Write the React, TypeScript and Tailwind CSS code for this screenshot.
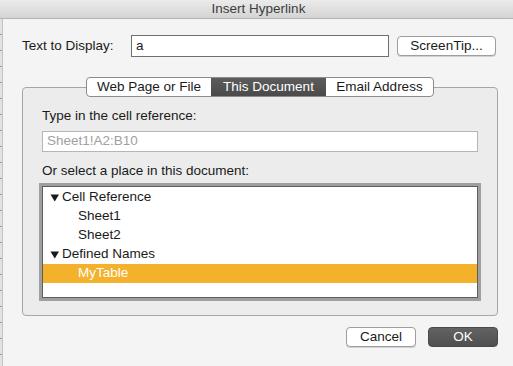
const font = "font-['Liberation_Sans','Helvetica_Neue',Arial,sans-serif]";

const Caret = () => (
  <svg width="10" height="8" viewBox="0 0 10 8" className="mr-[2px] shrink-0">
    <path d="M0.5 0.5 H9 L4.75 7.5 Z" fill="#1a1a1a" />
  </svg>
);

const rows = [
  { label: "Cell Reference", level: 0 },
  { label: "Sheet1", level: 1 },
  { label: "Sheet2", level: 1 },
  { label: "Defined Names", level: 0 },
  { label: "MyTable", level: 1, selected: true },
];

const App = () => {
  return (
    <div className={`flex h-[366px] w-[513px] flex-col overflow-hidden bg-[#f4f4f4] text-[13.5px] text-[#1a1a1a] ${font}`}>
      {/* title bar */}
      <div className="flex h-[19px] shrink-0 items-center justify-center border-b border-[#b4b4b4] bg-gradient-to-b from-[#ebebeb] to-[#d4d4d4] pl-[4px] leading-none text-[#3c3c3c]">
        Insert Hyperlink
      </div>

      <div className="flex flex-1">
        {/* sheet peeking behind the dialog */}
        <div className="w-[3px] shrink-0 border-r border-[#c4c4c4] bg-[repeating-linear-gradient(to_bottom,#e2e2e2_0px,#e2e2e2_15px,#9c9c9c_15px,#9c9c9c_16px)]" />

        <div className="flex flex-1 flex-col pl-[19px] pr-[16px]">
          <div className="mt-[16px] flex h-[22px] items-center">
            <span className="w-[109px]">Text to Display:</span>
            <div className="flex h-[22px] w-[258px] items-center border border-[#6f6f6f] bg-white pl-[4px]">a</div>
            <button className="ml-[8px] h-[20px] w-[99px] rounded-[4px] border border-[#9e9e9e] bg-white leading-none shadow-[0_1px_0_#d0d0d0]">
              ScreenTip...
            </button>
          </div>

          {/* tabs */}
          <div className="relative z-10 mt-[20px] flex justify-center">
            <div className="flex h-[20px] overflow-hidden rounded-[4px] border border-[#8c8c8c] bg-white leading-none">
              <div className="flex w-[124px] items-center justify-center">Web Page or File</div>
              <div className="flex w-[115px] items-center justify-center bg-gradient-to-b from-[#5c5c5c] to-[#4a4a4a] text-white">
                This Document
              </div>
              <div className="flex w-[107px] items-center justify-center">Email Address</div>
            </div>
          </div>

          {/* group box */}
          <div className="-mt-[10px] flex h-[229px] flex-col rounded-[4px] border border-[#a6a6a6] bg-[#ececec] pl-[19px] pr-[19px] pt-[20px]">
            <div className="h-[16px] leading-[16px]">Type in the cell reference:</div>
            <div className="mt-[7px] flex h-[21px] items-center border border-[#b6b6b6] bg-white pl-[4px] text-[#a0a0a0]">
              Sheet1!A2:B10
            </div>
            <div className="mt-[11px] h-[16px] leading-[16px]">Or select a place in this document:</div>
            <div className="mt-[7px] h-[112px] w-[436px] border border-[#5e5e5e] bg-white pt-px shadow-[0_0_0_3px_#9f9f9f]">
              {rows.map((r) => (
                <div
                  key={r.label}
                  className={`flex h-[19px] items-center ${r.level ? "pl-[35px]" : "pl-[7px]"} ${
                    r.selected ? "bg-[#f4b12c] text-white" : ""
                  }`}
                >
                  {!r.level && <Caret />}
                  {r.label}
                </div>
              ))}
            </div>
          </div>

          {/* footer buttons */}
          <div className="mt-[11px] flex justify-end gap-[12px]">
            <button className="h-[20px] w-[70px] rounded-[4px] border border-[#9e9e9e] bg-white leading-none shadow-[0_1px_0_#d0d0d0]">
              Cancel
            </button>
            <button className="h-[20px] w-[70px] rounded-[4px] border border-[#4a4a4a] bg-gradient-to-b from-[#636363] to-[#4f4f4f] leading-none text-white">
              OK
            </button>
          </div>
        </div>
      </div>
    </div>
  );
};

export default App;
